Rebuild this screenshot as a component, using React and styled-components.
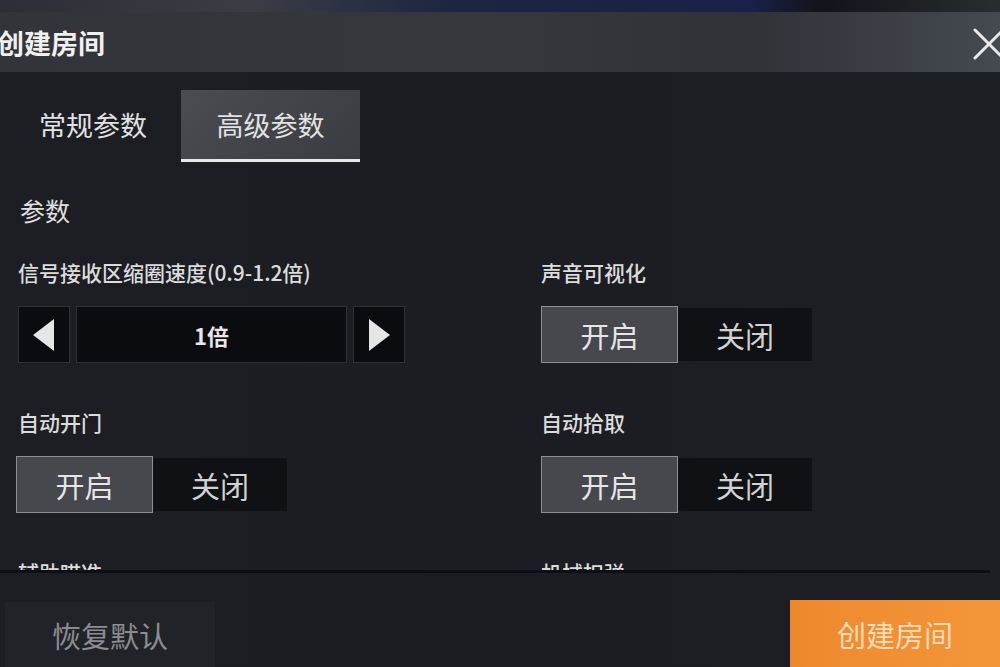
import React, { useState } from 'react';
import styled, { createGlobalStyle } from 'styled-components';

const GlobalStyle = createGlobalStyle`
  html, body {
    margin: 0;
    padding: 0;
    background: #1b1d22;
  }
  body {
    font-family: "Noto Sans CJK SC", "Noto Sans", "Liberation Sans", sans-serif;
    color: #e4e4e4;
  }
  * {
    box-sizing: border-box;
  }
`;

const Screen = styled.div`
  width: 1000px;
  height: 667px;
  display: flex;
  flex-direction: column;
  overflow: hidden;
  background: linear-gradient(90deg, #1c1e23 0%, #1b1d23 55%, #1e1f25 100%);
`;

const TopStrip = styled.div`
  height: 12px;
  flex-shrink: 0;
  background: linear-gradient(
    90deg,
    #2b2e36 0%,
    #3b3d44 25%,
    #1d2540 45%,
    #1a2148 75%,
    #121318 82%,
    #2a2c30 100%
  );
`;

const Header = styled.div`
  height: 60px;
  flex-shrink: 0;
  display: flex;
  align-items: center;
  justify-content: space-between;
  overflow: hidden;
  background: linear-gradient(90deg, #313439 0%, #34373c 50%, #2f3338 75%, #454950 100%);
`;

const Title = styled.h1`
  margin: 0 0 0 -3px;
  font-size: 27px;
  font-weight: 700;
  color: #f0f0f0;
`;

const CloseIcon = styled.svg`
  width: 34px;
  height: 34px;
  margin-right: -6px;
  margin-top: 4px;
`;

const Tabs = styled.div`
  display: flex;
  padding: 18px 0 0 5px;
  flex-shrink: 0;
`;

const Tab = styled.button`
  width: ${p => (p.$active ? 179 : 176)}px;
  height: 72px;
  border: none;
  padding: 0;
  font-family: inherit;
  font-size: 27px;
  color: #e2e2e2;
  background: ${p =>
    p.$active ? 'linear-gradient(135deg, #4a4c51 0%, #3a3c41 100%)' : 'transparent'};
  border-bottom: 3px solid ${p => (p.$active ? '#e8e8e8' : 'transparent')};
  cursor: pointer;
`;

const Scroll = styled.div`
  height: 408px;
  flex-shrink: 0;
  overflow: hidden;
  padding-left: 18px;
`;

const SectionTitle = styled.div`
  margin-top: 30px;
  height: 36px;
  line-height: 36px;
  font-size: 25px;
  padding-left: 2px;
  color: #e0e0e0;
`;

const Grid = styled.div`
  display: grid;
  grid-template-columns: 523px 1fr;
  row-gap: 45px;
  margin-top: 30px;
`;

const Cell = styled.div`
  display: flex;
  flex-direction: column;
  align-items: flex-start;
`;

const Label = styled.div`
  height: 28px;
  line-height: 28px;
  font-size: 21px;
  font-weight: 500;
  color: #dcdcdc;
  margin-bottom: 20px;
`;

const Stepper = styled.div`
  display: flex;
  gap: 6px;
  height: 57px;
`;

const StepButton = styled.button`
  width: 52px;
  height: 100%;
  padding: 0;
  display: flex;
  align-items: center;
  justify-content: center;
  background: #0b0c0f;
  border: 1px solid #2f3136;
  cursor: pointer;
`;

const StepValue = styled.div`
  width: 271px;
  height: 100%;
  display: flex;
  align-items: center;
  justify-content: center;
  background: #0b0c0f;
  border: 1px solid #2f3136;
  font-size: 22px;
  font-weight: 700;
  color: #e8e8e8;
`;

const Switch = styled.div`
  display: flex;
  height: 57px;
  margin-left: ${p => p.$shift || 0}px;
`;

const SwitchOption = styled.button`
  width: ${p => (p.$on ? 137 : 134)}px;
  padding: 0;
  font-family: inherit;
  font-size: 29px;
  color: ${p => (p.$selected ? '#e6e6e6' : '#d2d2d2')};
  background: ${p => (p.$selected ? '#46484e' : '#101115')};
  border: ${p => (p.$selected ? '1px solid #8d8f94' : 'none')};
  margin-top: ${p => (p.$selected ? 0 : 2)}px;
  height: ${p => (p.$selected ? 57 : 53)}px;
  cursor: pointer;
`;

const Divider = styled.div`
  height: 3px;
  margin: 0 10px 0 0;
  background: #0e0f12;
  flex-shrink: 0;
`;

const Footer = styled.div`
  flex: 1;
  display: flex;
  justify-content: space-between;
  align-items: flex-end;
  padding-left: 5px;
`;

const FooterButton = styled.button`
  width: 210px;
  height: ${p => (p.$primary ? 67 : 65)}px;
  border: none;
  padding: 0;
  font-family: inherit;
  font-size: 29px;
  color: ${p => (p.$primary ? '#fcdcb6' : '#8c8d91')};
  background: ${p =>
    p.$primary ? 'linear-gradient(90deg, #ee882d 0%, #f3963a 100%)' : '#212328'};
  cursor: pointer;
`;

function Toggle({ value, onChange, shift }) {
  return (
    <Switch $shift={shift}>
      <SwitchOption $on $selected={value} onClick={() => onChange(true)}>
        开启
      </SwitchOption>
      <SwitchOption $selected={!value} onClick={() => onChange(false)}>
        关闭
      </SwitchOption>
    </Switch>
  );
}

export default function App() {
  const [tab, setTab] = useState(1);
  const [speed, setSpeed] = useState(1);
  const [sound, setSound] = useState(true);
  const [door, setDoor] = useState(true);
  const [pickup, setPickup] = useState(true);

  const step = d => {
    setSpeed(prev => Math.min(1.2, Math.max(0.9, Math.round((prev + d) * 10) / 10)));
  };

  return (
    <>
      <GlobalStyle />
      <Screen>
        <TopStrip />
        <Header>
          <Title>创建房间</Title>
          <CloseIcon viewBox="0 0 34 34">
            <path d="M3 3 L31 31 M31 3 L3 31" stroke="#e9e9ea" strokeWidth="3" strokeLinecap="round" />
          </CloseIcon>
        </Header>
        <Tabs>
          <Tab $active={tab === 0} onClick={() => setTab(0)}>
            常规参数
          </Tab>
          <Tab $active={tab === 1} onClick={() => setTab(1)}>
            高级参数
          </Tab>
        </Tabs>
        <Scroll>
          <SectionTitle>参数</SectionTitle>
          <Grid>
            <Cell>
              <Label>信号接收区缩圈速度(0.9-1.2倍)</Label>
              <Stepper>
                <StepButton onClick={() => step(-0.1)}>
                  <svg width="24" height="34" viewBox="0 0 24 34">
                    <path d="M22 1 L22 33 L1 17 Z" fill="#e6e6e6" />
                  </svg>
                </StepButton>
                <StepValue>{speed}倍</StepValue>
                <StepButton onClick={() => step(0.1)}>
                  <svg width="24" height="34" viewBox="0 0 24 34">
                    <path d="M2 1 L2 33 L23 17 Z" fill="#e6e6e6" />
                  </svg>
                </StepButton>
              </Stepper>
            </Cell>
            <Cell>
              <Label>声音可视化</Label>
              <Toggle value={sound} onChange={setSound} />
            </Cell>
            <Cell>
              <Label>自动开门</Label>
              <Toggle value={door} onChange={setDoor} shift={-2} />
            </Cell>
            <Cell>
              <Label>自动拾取</Label>
              <Toggle value={pickup} onChange={setPickup} />
            </Cell>
            <Cell>
              <Label>辅助瞄准</Label>
            </Cell>
            <Cell>
              <Label>机械扣弹</Label>
            </Cell>
          </Grid>
        </Scroll>
        <Divider />
        <Footer>
          <FooterButton>恢复默认</FooterButton>
          <FooterButton $primary>创建房间</FooterButton>
        </Footer>
      </Screen>
    </>
  );
}
